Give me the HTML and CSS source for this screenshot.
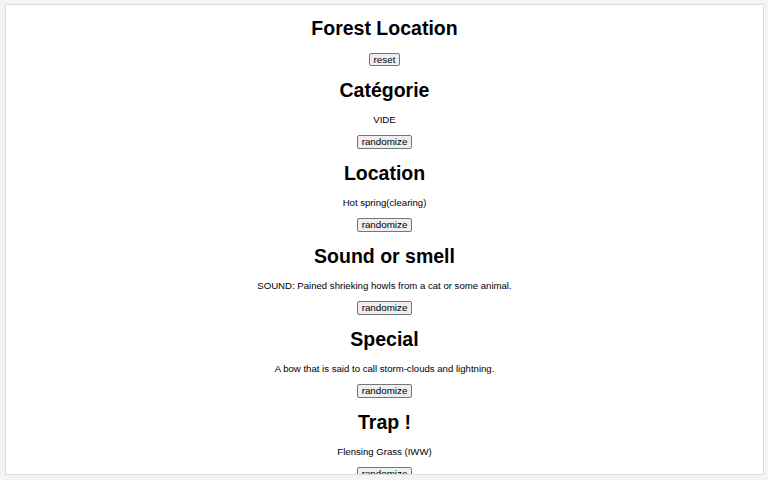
FILE: index.html
```html
<!DOCTYPE html>
<html lang="fr">
<head>
    <meta charset="UTF-8">
    <meta name="viewport" content="width=device-width, initial-scale=1.0">
    <title>Forest Location</title>
    <link rel="stylesheet" href="styles.css">
</head>
<body>
    <div class="frame">
        <div class="container">
            <h2>Forest Location</h2>
            <button class="btn btn-top">reset</button>

            <h2>Catégorie</h2>
            <p>VIDE</p>
            <button class="btn">randomize</button>

            <h2>Location</h2>
            <p>Hot spring(clearing)</p>
            <button class="btn">randomize</button>

            <h2>Sound or smell</h2>
            <p>SOUND: Pained shrieking howls from a cat or some animal.</p>
            <button class="btn">randomize</button>

            <h2>Special</h2>
            <p>A bow that is said to call storm-clouds and lightning.</p>
            <button class="btn">randomize</button>

            <h2>Trap !</h2>
            <p>Flensing Grass (IWW)</p>
            <button class="btn">randomize</button>
        </div>
    </div>
</body>
</html>
```

FILE: styles.css
```css
html, body { margin: 0; height: 480px; overflow: hidden; background: #f4f4f4; }
body { font-family: "Liberation Sans", Arial, sans-serif; color: #000; }
.frame { margin: 4px 4px 0 5px; width: 757px; height: 469px; border: 1px solid #dcdcdc; background: #fff; overflow: hidden; }
.container { display: flex; flex-direction: column; align-items: center; text-align: center; padding-top: 12px; }
h2 { margin: 13px 0 0; font-size: 19.5px; line-height: 22px; font-weight: bold; }
h2:first-child { margin-top: 0; }
p { margin: 13.5px 0 0; font-size: 9.6px; line-height: 12px; }
.btn { margin-top: 9px; padding: 0 4px; font-family: "Liberation Sans", Arial, sans-serif; font-size: 9.8px; line-height: 11.5px; color: #000; background: #efefef; border: 1px solid #767676; border-radius: 2px; }
.btn-top { margin-top: 13.5px; }
.btn-top + h2 { margin-top: 12.5px; }
```
